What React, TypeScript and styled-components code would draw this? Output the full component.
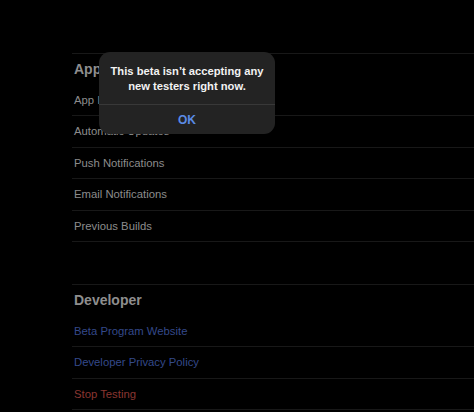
import styled, { createGlobalStyle } from "styled-components";

const Global = createGlobalStyle`
    html, body {
        margin: 0;
        padding: 0;
        background: #000;
    }
    body {
        font-family: "Liberation Sans", Arial, sans-serif;
        -webkit-font-smoothing: antialiased;
    }
`;

const Page = styled.div`
    position: relative;
    width: 474px;
    height: 412px;
    overflow: hidden;
    background: #000;
    padding: 53px 0 0 72px;
    box-sizing: border-box;
    display: flex;
    flex-direction: column;
    gap: 42px;
`;

const Section = styled.div`
    display: flex;
    flex-direction: column;
    border-top: 1px solid #181818;
`;

const Heading = styled.div`
    height: 30.5px;
    display: flex;
    align-items: center;
    padding-left: 2px;
    font-size: 14px;
    font-weight: 700;
    color: #8e8e8e;
`;

const Row = styled.div<{ $tone?: "plain" | "link" | "danger"; $last?: boolean }>`
    height: 30.5px;
    display: flex;
    align-items: center;
    padding-left: 2px;
    font-size: 11.3px;
    border-bottom: ${(p) => (p.$last ? "none" : "1px solid #181818")};
    color: ${(p) =>
        p.$tone === "link" ? "#34498a" : p.$tone === "danger" ? "#8a3631" : "#8c8c8c"};
`;

const Alert = styled.div`
    position: absolute;
    left: 99px;
    top: 52px;
    width: 176px;
    height: 82px;
    border-radius: 11px;
    background: #232323;
    display: flex;
    flex-direction: column;
    overflow: hidden;
`;

const AlertText = styled.div`
    padding: 12px 8px 10px;
    text-align: center;
    color: #f2f2f2;
    font-size: 11.2px;
    font-weight: 700;
    line-height: 15px;
    border-bottom: 1px solid #383838;
`;

const AlertButton = styled.div`
    flex: 1;
    display: flex;
    align-items: center;
    justify-content: center;
    color: #5a8be6;
    font-size: 12px;
    font-weight: 700;
`;

const appRows = [
    "App Information",
    "Automatic Updates",
    "Push Notifications",
    "Email Notifications",
    "Previous Builds",
];

const devRows: { label: string; tone: "link" | "danger" }[] = [
    { label: "Beta Program Website", tone: "link" },
    { label: "Developer Privacy Policy", tone: "link" },
    { label: "Stop Testing", tone: "danger" },
];

const App = () => {
    return (
        <Page>
            <Global />
            <Section>
                <Heading>App Information</Heading>
                {appRows.map((r) => (
                    <Row key={r}>{r}</Row>
                ))}
            </Section>
            <Section>
                <Heading>Developer</Heading>
                {devRows.map((r) => (
                    <Row key={r.label} $tone={r.tone}>
                        {r.label}
                    </Row>
                ))}
            </Section>
            <Alert>
                <AlertText>
                    This beta isn’t accepting any
                    <br />
                    new testers right now.
                </AlertText>
                <AlertButton>OK</AlertButton>
            </Alert>
        </Page>
    );
};

export default App;
